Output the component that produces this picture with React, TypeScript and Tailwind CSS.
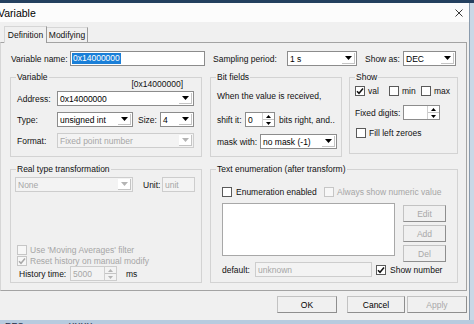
import React from "react";

type P = { className?: string; text?: string; disabled?: boolean };

const Arrow = ({ disabled }: { disabled?: boolean }) => (
  <div className="ml-auto mr-px flex h-[11px] w-[13px] shrink-0 items-center justify-center border-b border-r border-[#c4c4c4] bg-white">
    <svg width="7" height="4" viewBox="0 0 7 4">
      <path d="M0 0H7L3.5 4Z" fill={disabled ? "#b4b4b4" : "#000"} />
    </svg>
  </div>
);

function Combo({ className = "", text, disabled }: P) {
  return (
    <div
      className={`flex h-[15px] shrink-0 items-center border ${
        disabled ? "border-[#cdcdcd] bg-[#f3f3f3] text-[#a6a6a6]" : "border-[#8c8c8c] bg-white text-black"
      } ${className}`}
    >
      <span className="whitespace-nowrap pl-[2px]">{text}</span>
      <Arrow disabled={disabled} />
    </div>
  );
}

function Input({ className = "", text, disabled, selected }: P & { selected?: boolean }) {
  return (
    <div
      className={`flex h-[15px] shrink-0 items-center border ${
        disabled ? "border-[#cdcdcd] bg-[#f3f3f3] text-[#a6a6a6]" : "border-[#8c8c8c] bg-white text-black"
      } ${className}`}
    >
      {selected ? (
        <span className="ml-px bg-[#1a7fd8] px-px leading-[11px] text-white">{text}</span>
      ) : (
        <span className="whitespace-nowrap pl-[2px]">{text}</span>
      )}
    </div>
  );
}

function Spin({ className = "", text, disabled }: P) {
  const c = disabled ? "#b4b4b4" : "#000";
  return (
    <div
      className={`flex h-[15px] shrink-0 items-stretch border ${
        disabled ? "border-[#cdcdcd] bg-[#f3f3f3] text-[#a6a6a6]" : "border-[#8c8c8c] bg-white text-black"
      } ${className}`}
    >
      <span className="flex items-center pl-[2px]">{text}</span>
      <div className="ml-auto flex w-[12px] flex-col border-l border-[#d0d0d0]">
        <div className="flex flex-1 items-center justify-center border-b border-[#c4c4c4]">
          <svg width="5" height="3" viewBox="0 0 5 3">
            <path d="M0 3H5L2.5 0Z" fill={c} />
          </svg>
        </div>
        <div className="flex flex-1 items-center justify-center">
          <svg width="5" height="3" viewBox="0 0 5 3">
            <path d="M0 0H5L2.5 3Z" fill={c} />
          </svg>
        </div>
      </div>
    </div>
  );
}

function Check({ checked, disabled }: { checked?: boolean; disabled?: boolean }) {
  return (
    <div
      className={`flex h-[10px] w-[10px] shrink-0 items-center justify-center border ${
        disabled ? "border-[#c6c6c6] bg-[#f7f7f7]" : "border-[#5a5a5a] bg-white"
      }`}
    >
      {checked && (
        <svg width="8" height="8" viewBox="0 0 8 8">
          <path d="M1 4.2L3 6.3L7 1.6" fill="none" stroke={disabled ? "#a8a8a8" : "#111"} strokeWidth="1.5" />
        </svg>
      )}
    </div>
  );
}

function Btn({ className = "", text, disabled }: P) {
  return (
    <div
      className={`flex h-[17px] shrink-0 items-center justify-center border border-[#c2c2c2] border-b-[#8e8e8e] border-r-[#8e8e8e] bg-[#f0f0f0] ${
        disabled ? "text-[#a8a8a8]" : "text-black"
      } ${className}`}
    >
      {text}
    </div>
  );
}

function Group({ title, className = "", children }: { title: string; className?: string; children?: React.ReactNode }) {
  return (
    <div className={`relative shrink-0 border border-[#d3d3d3] ${className}`}>
      <span className="absolute left-[5px] top-[-6px] bg-[#f0f0f0] px-px leading-[10px] whitespace-nowrap">{title}</span>
      {children}
    </div>
  );
}

export default function App() {
  return (
    <div className="flex h-[324px] w-[474px] flex-col overflow-hidden bg-[#c4d4e4] font-['Liberation_Sans',Arial,sans-serif] text-[8.5px] leading-[10px] text-[#111]">
      <div className="h-[3px] shrink-0 bg-[#24405f]" />
      <div className="flex h-[317px] shrink-0">
        <div className="flex w-[470px] shrink-0 flex-col border-r border-[#8a9bad] bg-[#f0f0f0]">
          {/* title bar */}
          <div className="flex h-[19px] shrink-0 items-center bg-[#fcfcfc]">
            <span className="-ml-[2px] text-[10.5px] leading-[12px] text-black">Variable</span>
            <svg className="ml-auto mr-[6px]" width="8" height="8" viewBox="0 0 8 8">
              <path d="M0.5 0.5L7.5 7.5M7.5 0.5L0.5 7.5" stroke="#3a3a3a" strokeWidth="1" />
            </svg>
          </div>
          {/* tabs */}
          <div className="flex h-[20px] shrink-0 items-end pl-[4px]">
            <div className="relative z-10 -mb-px flex h-[17px] w-[43px] items-center justify-center border border-b-0 border-[#d6d6d6] border-r-[#9a9a9a] bg-[#f0f0f0]">
              Definition
            </div>
            <div className="flex h-[15px] w-[41px] items-center justify-center border-r border-t border-[#d6d6d6] border-r-[#9a9a9a]">
              Modifying
            </div>
          </div>
          {/* panel */}
          <div className="flex h-[249px] w-[467px] shrink-0 flex-col border border-[#a3a3a3] border-l-[#d6d6d6]">
            {/* row 1 */}
            <div className="mt-[8px] flex h-[15px] items-center">
              <span className="ml-[10px] w-[59px] shrink-0">Variable name:</span>
              <Input className="w-[135px]" text="0x14000000" selected />
              <span className="ml-[8px] w-[74px] shrink-0">Sampling period:</span>
              <Combo className="w-[70px]" text="1 s" />
              <span className="ml-[8px] w-[38px] shrink-0">Show as:</span>
              <Combo className="w-[53px]" text="DEC" />
            </div>
            {/* row 2 */}
            <div className="mt-[11px] flex items-start">
              <Group title="Variable" className="ml-[9px] h-[80px] w-[192px]">
                <div className="mt-px flex h-[10px] justify-end pr-[18px]">[0x14000000]</div>
                <div className="mt-[2px] flex h-[15px] items-center pl-[6px]">
                  <span className="w-[40px] shrink-0">Address:</span>
                  <Combo className="w-[137px]" text="0x14000000" />
                </div>
                <div className="mt-[6px] flex h-[15px] items-center pl-[6px]">
                  <span className="w-[40px] shrink-0">Type:</span>
                  <Combo className="w-[76px]" text="unsigned int" />
                  <span className="ml-[5px] w-[22px] shrink-0">Size:</span>
                  <Combo className="w-[34px]" text="4" />
                </div>
                <div className="mt-[6px] flex h-[15px] items-center pl-[6px]">
                  <span className="w-[40px] shrink-0">Format:</span>
                  <Combo className="w-[137px]" text="Fixed point number" disabled />
                </div>
              </Group>
              <Group title="Bit fields" className="ml-[8px] h-[80px] w-[132px]">
                <div className="mt-[13px] pl-[6px] whitespace-nowrap">When the value is received,</div>
                <div className="mt-[11px] flex h-[15px] items-center pl-[6px]">
                  <span className="w-[28px] shrink-0">shift it:</span>
                  <Spin className="w-[30px]" text="0" />
                  <span className="ml-[4px] whitespace-nowrap">bits right, and..</span>
                </div>
                <div className="mt-[7px] flex h-[15px] items-center pl-[6px]">
                  <span className="w-[43px] shrink-0">mask with:</span>
                  <Combo className="w-[77px]" text="no mask (-1)" />
                </div>
              </Group>
              <Group title="Show" className="ml-[7px] h-[77px] w-[109px]">
                <div className="mt-[7px] flex h-[11px] items-center pl-[5px]">
                  <div className="flex w-[34px] shrink-0 items-center gap-[3px]">
                    <Check checked />
                    <span>val</span>
                  </div>
                  <div className="flex w-[32px] shrink-0 items-center gap-[3px]">
                    <Check />
                    <span>min</span>
                  </div>
                  <div className="flex items-center gap-[3px]">
                    <Check />
                    <span>max</span>
                  </div>
                </div>
                <div className="mt-[9px] flex h-[15px] items-center pl-[5px]">
                  <span className="w-[48px] shrink-0">Fixed digits:</span>
                  <Spin className="w-[37px]" text="" />
                </div>
                <div className="mt-[7px] flex h-[11px] items-center gap-[3px] pl-[6px]">
                  <Check />
                  <span>Fill left zeroes</span>
                </div>
              </Group>
            </div>
            {/* row 3 */}
            <div className="mt-[12px] flex items-start">
              <Group title="Real type transformation" className="ml-[9px] h-[114px] w-[192px]">
                <div className="mt-[7px] flex h-[15px] items-center pl-[4px]">
                  <Combo className="w-[118px]" text="None" disabled />
                  <span className="ml-[10px] w-[19px] shrink-0">Unit:</span>
                  <Input className="w-[33px]" text="unit" disabled />
                </div>
                <div className="mt-[52px] flex h-[11px] items-center gap-[3px] pl-[6px] text-[#a6a6a6]">
                  <Check disabled />
                  <span className="whitespace-nowrap">Use 'Moving Averages' filter</span>
                </div>
                <div className="flex h-[11px] items-center gap-[3px] pl-[6px] text-[#a6a6a6]">
                  <Check checked disabled />
                  <span className="whitespace-nowrap">Reset history on manual modify</span>
                </div>
                <div className="flex h-[15px] items-center pl-[8px]">
                  <span className="w-[51px] shrink-0">History time:</span>
                  <Spin className="w-[47px]" text="5000" disabled />
                  <span className="ml-[9px]">ms</span>
                </div>
              </Group>
              <Group title="Text enumeration (after transform)" className="ml-[8px] h-[114px] w-[248px]">
                <div className="mt-[16px] flex h-[11px] items-center pl-[11px]">
                  <div className="flex w-[102px] shrink-0 items-center gap-[4px]">
                    <Check />
                    <span className="whitespace-nowrap">Enumeration enabled</span>
                  </div>
                  <div className="flex items-center gap-[3px] text-[#a6a6a6]">
                    <Check disabled />
                    <span className="whitespace-nowrap">Always show numeric value</span>
                  </div>
                </div>
                <div className="mt-[6px] flex items-start pl-[11px]">
                  <div className="h-[53px] w-[173px] shrink-0 border border-[#a8a8a8] bg-white" />
                  <div className="ml-[8px] mt-[2px] flex flex-col gap-[3px]">
                    <Btn className="w-[43px]" text="Edit" disabled />
                    <Btn className="w-[43px]" text="Add" disabled />
                    <Btn className="w-[43px]" text="Del" disabled />
                  </div>
                </div>
                <div className="flex h-[15px] items-center pl-[11px]">
                  <span className="w-[33px] shrink-0">default:</span>
                  <Input className="w-[117px]" text="unknown" disabled />
                  <div className="ml-[4px] flex items-center gap-[4px]">
                    <Check checked />
                    <span className="whitespace-nowrap">Show number</span>
                  </div>
                </div>
              </Group>
            </div>
          </div>
          {/* bottom buttons */}
          <div className="flex flex-1 items-start pl-[277px] pt-[5px]">
            <Btn className="w-[60px] border-[#8e8e8e]" text="OK" />
            <Btn className="ml-[10px] w-[58px]" text="Cancel" />
            <Btn className="ml-[2px] w-[60px]" text="Apply" disabled />
          </div>
        </div>
        <div className="flex-1 bg-[#c9d8e6]" />
      </div>
      <div className="flex h-[4px] shrink-0 overflow-hidden bg-[#b7cbdf] text-[9px] leading-[10px] text-[#1d2d46]">
        <span className="ml-[5px] mt-px">RES</span>
        <span className="ml-[45px] mt-px">XXXX</span>
      </div>
    </div>
  );
}
